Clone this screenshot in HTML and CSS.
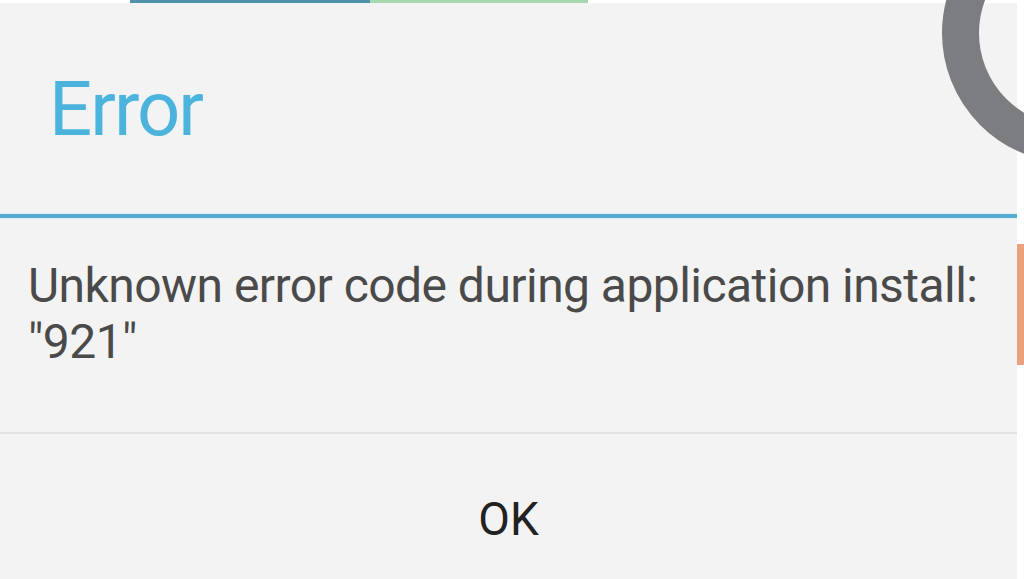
FILE: index.html
```html
<!DOCTYPE html>
<html lang="en">
<head>
  <meta charset="UTF-8" />
  <meta name="viewport" content="width=device-width, initial-scale=1.0"/>
  <title>Error</title>
  <link rel="stylesheet" href="styles.css">
</head>
<body>
  <div class="topbar">
    <div class="progress">
      <span class="seg seg-teal"></span>
      <span class="seg seg-green"></span>
    </div>
  </div>

  <div class="screen">
    <div class="dialog">
      <h1 class="title">Error</h1>
      <div class="title-line"></div>

      <p class="message">Unknown error code during application install:<br>"921"</p>

      <div class="actions">
        <button class="ok-btn">OK</button>
      </div>
    </div>

    <div class="edge">
      <span class="edge-tab"></span>
    </div>
  </div>

  <svg class="spinner" width="120" height="170" viewBox="0 0 120 170">
    <circle cx="168" cy="33" r="111.5" fill="none" stroke="#7c7d81" stroke-width="37"/>
  </svg>
</body>
</html>
```

FILE: styles.css
```css
body {
  margin: 0;
  padding: 0;
  background-color: #ffffff;
  font-family: Roboto, "Liberation Sans", sans-serif;
  overflow: hidden;
}

.topbar {
  height: 3px;
  background-color: #ffffff;
}

.progress {
  display: flex;
  margin-left: 130px;
  height: 3px;
}

.seg {
  display: block;
  height: 3px;
}

.seg-teal {
  width: 240px;
  background-color: #4e93aa;
}

.seg-green {
  width: 218px;
  background-color: #a8d8b0;
}

.screen {
  display: flex;
  height: 576px;
}

.dialog {
  width: 1017px;
  background-color: #f3f3f3;
  display: flex;
  flex-direction: column;
}

.title {
  margin: 0;
  padding: 56px 0 0 49px;
  height: 149px;
  box-sizing: border-box;
  font-size: 76px;
  font-weight: 400;
  letter-spacing: -2px;
  line-height: 100px;
  color: #4cb3dc;
}

.title-line {
  height: 4px;
  margin-top: 62px;
  background-color: #56abd1;
  box-shadow: 0 0 2px #bfe9f7;
}

.message {
  margin: 0;
  padding: 40px 20px 0 28px;
  height: 214px;
  box-sizing: border-box;
  font-size: 48px;
  letter-spacing: -0.55px;
  line-height: 56px;
  color: #4a4a4a;
  white-space: nowrap;
}

.actions {
  border-top: 2px solid #e2e2e2;
  flex: 1;
  display: flex;
  justify-content: center;
  align-items: center;
}

.ok-btn {
  font-family: Roboto, "Liberation Sans", sans-serif;
  font-size: 46px;
  color: #222222;
  background: none;
  border: none;
  padding: 0;
  margin: 24px 0 0 0;
}

.edge {
  flex: 1;
  background-color: #ffffff;
}

.edge-tab {
  display: block;
  margin-top: 241px;
  height: 121px;
  background-color: #e9a27d;
}

.spinner {
  position: absolute;
  top: 0;
  right: 0;
}
```
